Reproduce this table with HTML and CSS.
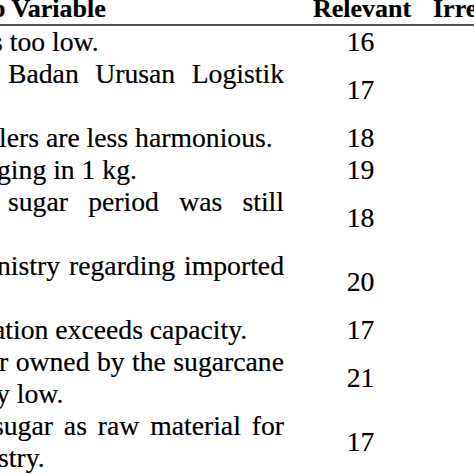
FILE: index.html
```html
<!DOCTYPE html>
<html>
<head>
<meta charset="utf-8">
<link rel="stylesheet" href="styles.css">
</head>
<body>
<div class="tbl">
  <div class="th sub"><span class="x-38">Sub Variable</span></div>
  <div class="th rel">Relevant</div>
  <div class="th irr">Irrelevant</div>

  <div class="td txt first"><div class="ln x-8">s too low.</div></div>
  <div class="td num first">16</div>
  <div class="td first"></div>

  <div class="td txt"><div class="ln just x8">Badan Urusan Logistik</div><div class="blank"></div></div>
  <div class="td num">17</div>
  <div class="td"></div>

  <div class="td txt"><div class="ln x-1">lers are less harmonious.</div></div>
  <div class="td num">18</div>
  <div class="td"></div>

  <div class="td txt"><div class="ln x-3">ging in 1 kg.</div></div>
  <div class="td num">19</div>
  <div class="td"></div>

  <div class="td txt"><div class="ln just x8">sugar period was still</div><div class="blank"></div></div>
  <div class="td num">18</div>
  <div class="td"></div>

  <div class="td txt"><div class="ln just x-3">nistry regarding imported</div><div class="blank"></div></div>
  <div class="td num">20</div>
  <div class="td"></div>

  <div class="td txt"><div class="ln x-7">ation exceeds capacity.</div></div>
  <div class="td num">17</div>
  <div class="td"></div>

  <div class="td txt"><div class="ln just x-1">r owned by the sugarcane</div><div class="ln x-4">y low.</div></div>
  <div class="td num">21</div>
  <div class="td"></div>

  <div class="td txt"><div class="ln just x-7">sugar as raw material for</div><div class="ln x-2">stry.</div></div>
  <div class="td num">17</div>
  <div class="td"></div>
</div>
</body>
</html>
```

FILE: styles.css
```css
html, body {
  margin: 0;
  padding: 0;
  background: #ffffff;
  overflow: hidden;
  width: 474px;
  height: 474px;
}
body {
  font-family: "Liberation Serif", "Times New Roman", serif;
  color: #000000;
  -webkit-text-stroke: 0.2px #000000;
}
.tbl {
  display: grid;
  grid-template-columns: 300px 124px 50px;
  margin-top: -3.3px;
}
.th {
  font-weight: bold;
  font-size: 26px;
  line-height: 24px;
  padding-bottom: 3px;
  border-bottom: 2px solid #505050;
  white-space: nowrap;
}
.th.sub {
  padding-right: 16px;
}
.th.rel {
  text-align: center;
}
.th.irr {
  padding-left: 9px;
}
.x-38 {
  margin-left: -38px;
}
.td {
  font-size: 27.7px;
  line-height: 32px;
}
.td.first {
  padding-top: 0.6px;
}
.txt {
  padding-right: 16px;
}
.ln {
  white-space: nowrap;
}
.ln.just {
  white-space: normal;
  text-align: justify;
  text-align-last: justify;
}
.blank {
  height: 32px;
}
.num {
  display: flex;
  align-items: center;
  justify-content: center;
  padding-right: 3px;
}
.x8 { margin-left: 8px; }
.x-1 { margin-left: -1px; }
.x-2 { margin-left: -2px; }
.x-3 { margin-left: -3px; }
.x-4 { margin-left: -4px; }
.x-7 { margin-left: -7px; }
.x-8 { margin-left: -8px; }
```
